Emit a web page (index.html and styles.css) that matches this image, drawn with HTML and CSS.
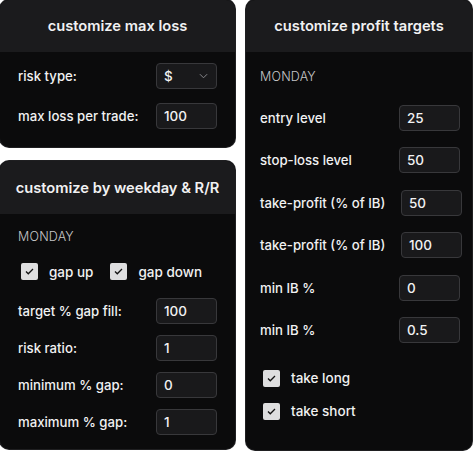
FILE: index.html
```html
<!DOCTYPE html>
<html>
<head>
<meta charset="utf-8">
<link rel="stylesheet" href="styles.css">
</head>
<body>
<div class="page">
  <div class="col-left">
    <section class="card card-loss">
      <header class="card-head">customize max loss</header>
      <div class="card-body body-loss">
        <div class="row">
          <span class="label">risk type:</span>
          <div class="field select"><span>$</span>
            <svg class="chev" viewBox="0 0 10 6" width="9" height="6"><path d="M1 1l4 4 4-4" fill="none" stroke="#8a8a8e" stroke-width="1.1"/></svg>
          </div>
        </div>
        <div class="row">
          <span class="label">max loss per trade:</span>
          <div class="field">100</div>
        </div>
      </div>
    </section>
    <section class="card card-weekday">
      <header class="card-head">customize by weekday &amp; R/R</header>
      <div class="card-body body-weekday">
        <div class="day">MONDAY</div>
        <div class="checks">
          <label class="check"><span class="box"><svg viewBox="0 0 10 8" width="9" height="7"><path d="M1 4l2.6 2.6L9 1.2" fill="none" stroke="#111" stroke-width="1.5"/></svg></span>gap up</label>
          <label class="check"><span class="box"><svg viewBox="0 0 10 8" width="9" height="7"><path d="M1 4l2.6 2.6L9 1.2" fill="none" stroke="#111" stroke-width="1.5"/></svg></span>gap down</label>
        </div>
        <div class="rows-tight">
          <div class="row"><span class="label">target % gap fill:</span><div class="field">100</div></div>
          <div class="row"><span class="label">risk ratio:</span><div class="field">1</div></div>
          <div class="row"><span class="label">minimum % gap:</span><div class="field">0</div></div>
          <div class="row"><span class="label">maximum % gap:</span><div class="field">1</div></div>
        </div>
      </div>
    </section>
  </div>
  <section class="card card-profit">
    <header class="card-head">customize profit targets</header>
    <div class="card-body body-profit">
      <div class="day">MONDAY</div>
      <div class="rows-wide">
        <div class="row"><span class="label">entry level</span><div class="field">25</div></div>
        <div class="row"><span class="label">stop-loss level</span><div class="field">50</div></div>
        <div class="row"><span class="label">take-profit (% of IB)</span><div class="field shift">50</div></div>
        <div class="row"><span class="label">take-profit (% of IB)</span><div class="field shift">100</div></div>
        <div class="row"><span class="label">min IB %</span><div class="field">0</div></div>
        <div class="row"><span class="label">min IB %</span><div class="field">0.5</div></div>
      </div>
      <div class="checks-col">
        <label class="check"><span class="box"><svg viewBox="0 0 10 8" width="9" height="7"><path d="M1 4l2.6 2.6L9 1.2" fill="none" stroke="#111" stroke-width="1.5"/></svg></span>take long</label>
        <label class="check"><span class="box"><svg viewBox="0 0 10 8" width="9" height="7"><path d="M1 4l2.6 2.6L9 1.2" fill="none" stroke="#111" stroke-width="1.5"/></svg></span>take short</label>
      </div>
    </div>
  </section>
</div>
</body>
</html>
```

FILE: styles.css
```css
* { box-sizing: border-box; }
html, body { margin: 0; padding: 0; background: #ffffff; }
body {
  font-family: "Inter", "DejaVu Sans", sans-serif;
  color: #f1f1f2;
  width: 474px;
  height: 452px;
  overflow: hidden;
}
.page {
  display: grid;
  grid-template-columns: 235px 226px;
  column-gap: 11px;
  align-items: start;
}
.col-left {
  display: flex;
  flex-direction: column;
  gap: 14px;
}
.card {
  background: #0b0b0c;
  border-radius: 9px;
  overflow: hidden;
  box-shadow: 0 0 0 1px #1f1f21;
}
.card-loss { height: 147px; }
.card-weekday { height: 288px; }
.card-profit { height: 450px; }
.card-head {
  background: #1b1b1d;
  height: 52px;
  display: flex;
  align-items: center;
  justify-content: center;
  font-size: 14.7px;
  font-weight: 600;
}
.card-weekday .card-head { height: 53px; }
.card-body {
  display: flex;
  flex-direction: column;
}
.body-loss { padding: 11px 18px 0 18px; gap: 14px; }
.body-weekday { padding: 14px 18px 0 18px; }
.body-profit { padding: 16px 12px 0 14px; }
.row {
  display: flex;
  align-items: center;
  justify-content: space-between;
  height: 26px;
}
.label { font-size: 13.2px; font-weight: 500; }
.field {
  width: 61px;
  height: 26px;
  background: #19191b;
  border: 1px solid #38383b;
  border-radius: 4px;
  display: flex;
  align-items: center;
  padding: 0 7px;
  font-size: 13.5px;
  font-weight: 500;
}
.select { justify-content: space-between; padding-right: 8px; }
.field.shift { margin-right: -2px; }
.day {
  font-size: 12.5px;
  font-weight: 300;
  color: #c6c6c8;
  letter-spacing: 0.2px;
  height: 18px;
  line-height: 18px;
}
.checks {
  display: flex;
  gap: 17px;
  margin-top: 17px;
  padding-left: 3px;
}
.check {
  display: flex;
  align-items: center;
  gap: 11px;
  font-size: 13.5px;
  font-weight: 500;
}
.box {
  width: 17px;
  height: 17px;
  background: #dededf;
  border-radius: 2px;
  display: flex;
  align-items: center;
  justify-content: center;
}
.rows-tight {
  display: flex;
  flex-direction: column;
  gap: 11px;
  margin-top: 18px;
}
.rows-wide {
  display: flex;
  flex-direction: column;
  gap: 16.4px;
  margin-top: 19px;
}
.checks-col {
  display: flex;
  flex-direction: column;
  gap: 16px;
  margin-top: 27px;
  padding-left: 3px;
}
```
